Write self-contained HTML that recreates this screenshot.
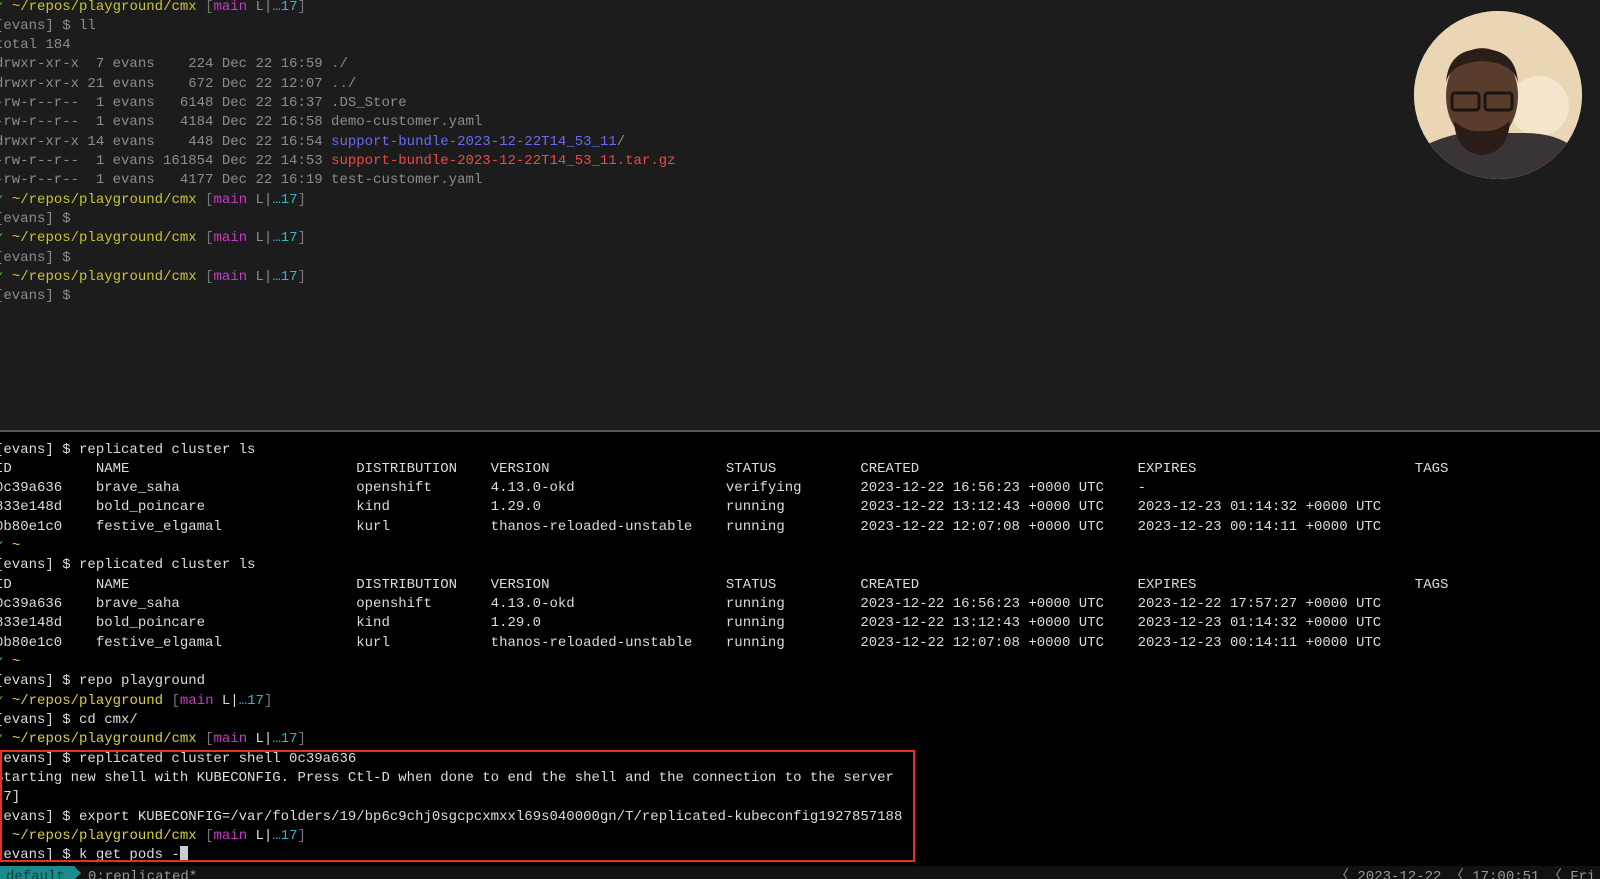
<!DOCTYPE html>
<html><head><meta charset="utf-8"><style>
html,body{margin:0;padding:0;width:1600px;height:879px;overflow:hidden;background:#000;}
body{position:relative;font-family:"Liberation Mono","DejaVu Sans Mono",monospace;font-size:14px;}
.top{position:absolute;left:0;top:0;width:1600px;height:430px;background:#1c1c1c;}
.sep{position:absolute;left:0;top:430px;width:1600px;height:2px;background:#555;}
pre{margin:0;font:inherit;position:absolute;left:-5px;line-height:19.33px;white-space:pre;}
.t{top:-2.5px;color:#8c8c8c;}
.b{top:440.5px;color:#dcdcdc;}
.g{color:#3cc83c}.y{color:#c8c43a}.p{color:#c43cc4}.c{color:#3ab4c8}.br{color:#777}
.bl{color:#6a6cf0}.rd{color:#f04848}
.bb .y{color:#d8d040}
.col{display:inline-block}
.w12{width:12ch}.w31{width:31ch}.w16{width:16ch}.w28{width:28ch}.w33{width:33ch}
.box{position:absolute;left:0;top:750px;width:915px;height:112px;border:2px solid #e8321e;box-sizing:border-box;}
.status{position:absolute;left:0;top:866px;width:1600px;height:13px;background:#111;color:#9a9a9a;line-height:22px;overflow:hidden;}
.def{position:absolute;left:0;top:0;width:74px;height:13px;background:#1b8c8c;color:#0a3a3a;padding-left:6px;box-sizing:border-box;}
.arr{position:absolute;left:74px;top:0;width:0;height:0;border-top:7px solid transparent;border-bottom:7px solid transparent;border-left:7px solid #1b8c8c;}
.cam{position:absolute;left:1414px;top:11px;width:168px;height:168px;border-radius:50%;overflow:hidden;background:#ecd9b8;}
.cur{display:inline-block;width:8px;height:15px;background:#ccc;vertical-align:-3px;}
</style></head><body>
<div class="top"></div>
<div class="sep"></div>
<pre class="t"><span class="g">✓</span> <span class="y">~/repos/playground/cmx</span> <span class="br">[</span><span class="p">main</span> L|<span class="c">…17</span><span class="br">]</span>
[evans] $ ll
total 184
drwxr-xr-x  7 evans    224 Dec 22 16:59 <span class="bl">.</span>/
drwxr-xr-x 21 evans    672 Dec 22 12:07 <span class="bl">..</span>/
-rw-r--r--  1 evans   6148 Dec 22 16:37 .DS_Store
-rw-r--r--  1 evans   4184 Dec 22 16:58 demo-customer.yaml
drwxr-xr-x 14 evans    448 Dec 22 16:54 <span class="bl">support-bundle-2023-12-22T14_53_11</span>/
-rw-r--r--  1 evans 161854 Dec 22 14:53 <span class="rd">support-bundle-2023-12-22T14_53_11.tar.gz</span>
-rw-r--r--  1 evans   4177 Dec 22 16:19 test-customer.yaml
<span class="g">✓</span> <span class="y">~/repos/playground/cmx</span> <span class="br">[</span><span class="p">main</span> L|<span class="c">…17</span><span class="br">]</span>
[evans] $
<span class="g">✓</span> <span class="y">~/repos/playground/cmx</span> <span class="br">[</span><span class="p">main</span> L|<span class="c">…17</span><span class="br">]</span>
[evans] $
<span class="g">✓</span> <span class="y">~/repos/playground/cmx</span> <span class="br">[</span><span class="p">main</span> L|<span class="c">…17</span><span class="br">]</span>
[evans] $</pre>
<pre class="b bb">[evans] $ replicated cluster ls
<span class="col w12">ID</span><span class="col w31">NAME</span><span class="col w16">DISTRIBUTION</span><span class="col w28">VERSION</span><span class="col w16">STATUS</span><span class="col w33">CREATED</span><span class="col w33">EXPIRES</span>TAGS
<span class="col w12">0c39a636</span><span class="col w31">brave_saha</span><span class="col w16">openshift</span><span class="col w28">4.13.0-okd</span><span class="col w16">verifying</span><span class="col w33">2023-12-22 16:56:23 +0000 UTC</span>-
<span class="col w12">833e148d</span><span class="col w31">bold_poincare</span><span class="col w16">kind</span><span class="col w28">1.29.0</span><span class="col w16">running</span><span class="col w33">2023-12-22 13:12:43 +0000 UTC</span>2023-12-23 01:14:32 +0000 UTC
<span class="col w12">0b80e1c0</span><span class="col w31">festive_elgamal</span><span class="col w16">kurl</span><span class="col w28">thanos-reloaded-unstable</span><span class="col w16">running</span><span class="col w33">2023-12-22 12:07:08 +0000 UTC</span>2023-12-23 00:14:11 +0000 UTC
<span class="g">✓</span> <span class="y">~</span>
[evans] $ replicated cluster ls
<span class="col w12">ID</span><span class="col w31">NAME</span><span class="col w16">DISTRIBUTION</span><span class="col w28">VERSION</span><span class="col w16">STATUS</span><span class="col w33">CREATED</span><span class="col w33">EXPIRES</span>TAGS
<span class="col w12">0c39a636</span><span class="col w31">brave_saha</span><span class="col w16">openshift</span><span class="col w28">4.13.0-okd</span><span class="col w16">running</span><span class="col w33">2023-12-22 16:56:23 +0000 UTC</span>2023-12-22 17:57:27 +0000 UTC
<span class="col w12">833e148d</span><span class="col w31">bold_poincare</span><span class="col w16">kind</span><span class="col w28">1.29.0</span><span class="col w16">running</span><span class="col w33">2023-12-22 13:12:43 +0000 UTC</span>2023-12-23 01:14:32 +0000 UTC
<span class="col w12">0b80e1c0</span><span class="col w31">festive_elgamal</span><span class="col w16">kurl</span><span class="col w28">thanos-reloaded-unstable</span><span class="col w16">running</span><span class="col w33">2023-12-22 12:07:08 +0000 UTC</span>2023-12-23 00:14:11 +0000 UTC
<span class="g">✓</span> <span class="y">~</span>
[evans] $ repo playground
<span class="g">✓</span> <span class="y">~/repos/playground</span> <span class="br">[</span><span class="p">main</span> L|<span class="c">…17</span><span class="br">]</span>
[evans] $ cd cmx/
<span class="g">✓</span> <span class="y">~/repos/playground/cmx</span> <span class="br">[</span><span class="p">main</span> L|<span class="c">…17</span><span class="br">]</span>
[evans] $ replicated cluster shell 0c39a636
Starting new shell with KUBECONFIG. Press Ctl-D when done to end the shell and the connection to the server
[7]
[evans] $ export KUBECONFIG=/var/folders/19/bp6c9chj0sgcpcxmxxl69s040000gn/T/replicated-kubeconfig1927857188
<span class="g">✓</span> <span class="y">~/repos/playground/cmx</span> <span class="br">[</span><span class="p">main</span> L|<span class="c">…17</span><span class="br">]</span>
[evans] $ k get pods -<span class="cur"></span></pre>
<div class="box"></div>
<div class="status"><div class="def">default</div><div class="arr"></div><span style="position:absolute;left:88px;top:0">0:replicated*</span><span style="position:absolute;left:1335px;top:0">〈 2023-12-22 〈 17:00:51 〈 Fri 〈</span></div>
<div class="cam">
<svg width="168" height="168" viewBox="0 0 168 168">
<rect width="168" height="168" fill="#ead6b4"/>
<ellipse cx="125" cy="95" rx="30" ry="30" fill="#f3e6cc"/>
<path d="M0 140 Q40 118 70 122 L110 122 Q150 122 168 145 L168 168 L0 168Z" fill="#3a3436"/>
<ellipse cx="68" cy="85" rx="36" ry="48" fill="#5a3c2c"/>
<path d="M32 72 Q34 38 68 38 Q102 38 104 72 Q100 52 68 50 Q36 52 32 72Z" fill="#2a1e18"/>
<path d="M40 110 Q42 142 68 144 Q94 142 96 110 Q82 122 68 120 Q54 122 40 110Z" fill="#2a1c16"/>
<rect x="38" y="82" width="27" height="17" rx="3" fill="none" stroke="#1a1414" stroke-width="3"/>
<rect x="71" y="82" width="27" height="17" rx="3" fill="none" stroke="#1a1414" stroke-width="3"/>
</svg></div>
</body></html>
